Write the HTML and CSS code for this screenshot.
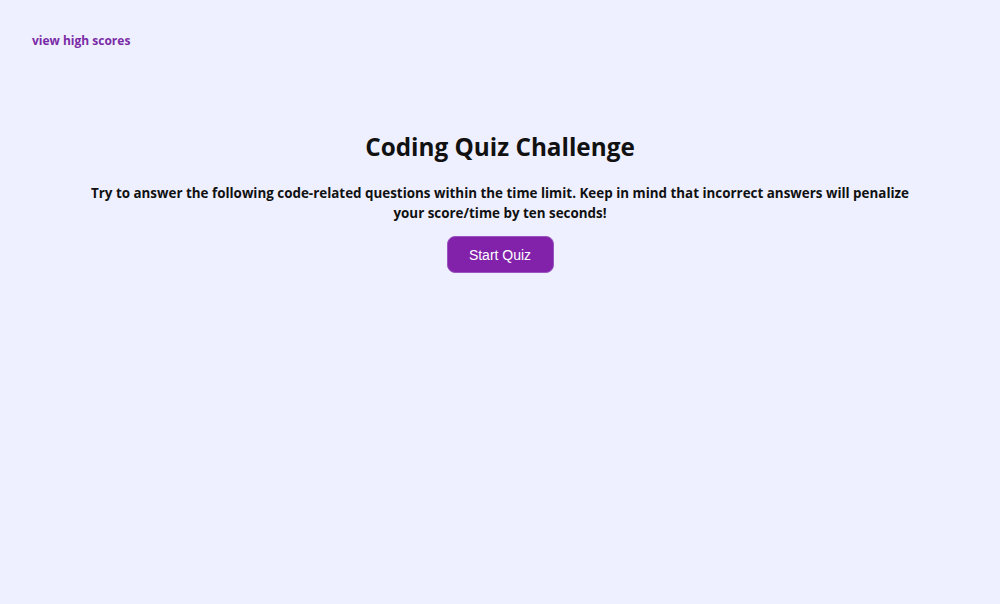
FILE: index.html
```html
<!DOCTYPE html>
<html>
<head>
<meta charset="utf-8">
<link rel="stylesheet" href="styles.css">
</head>
<body>
<header class="top">
  <a class="scores" href="#">view high scores</a>
</header>
<main class="intro">
  <h1 class="title">Coding Quiz Challenge</h1>
  <p class="desc">Try to answer the following code-related questions within the time limit. Keep in mind that incorrect answers will penalize your score/time by ten seconds!</p>
  <button class="start">Start Quiz</button>
</main>
</body>
</html>
```
FILE: styles.css
```css
html, body {
  margin: 0;
  padding: 0;
}
body {
  background: #eef0ff;
  font-family: "Open Sans", "Noto Sans", sans-serif;
  color: #111;
  height: 604px;
}
.top {
  padding: 28px 32px 0;
  height: 20px;
}
.scores {
  color: #7a2ba6;
  font-weight: 700;
  font-size: 12px;
  text-decoration: none;
}
.intro {
  display: flex;
  flex-direction: column;
  align-items: center;
  padding: 0 86px;
  margin-top: 82px;
}
.title {
  margin: 0;
  font-size: 24.3px;
  font-weight: 700;
  line-height: 34px;
}
.desc {
  margin: 19px 0 13px;
  font-size: 13.4px;
  font-weight: 700;
  line-height: 20px;
  text-align: center;
}
.start {
  width: 107px;
  height: 37px;
  background: #8221aa;
  color: #fff;
  border: 1px solid #9a55c0;
  border-radius: 8px;
  font-family: "Liberation Sans", Arial, sans-serif;
  font-size: 14px;
}
```
